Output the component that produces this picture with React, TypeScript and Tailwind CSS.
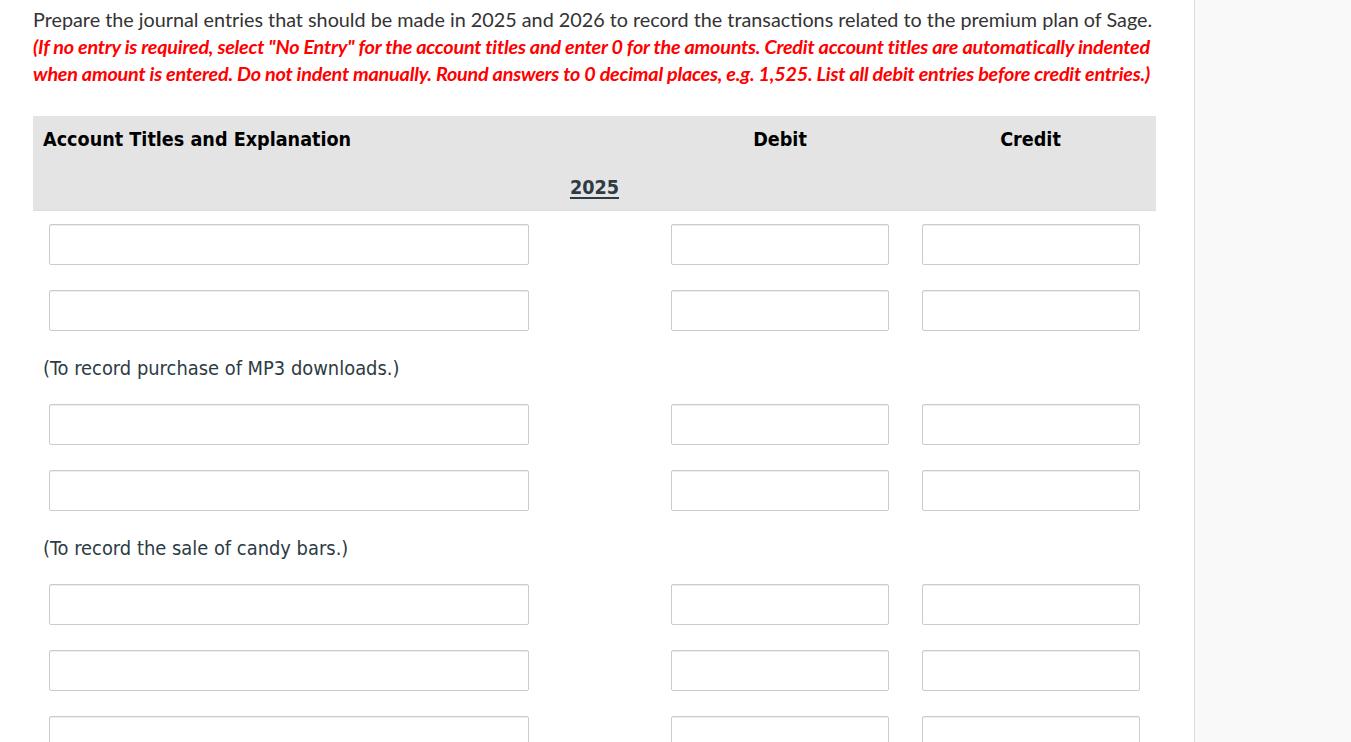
import React from "react";

const tableFont = { fontFamily: 'Tahoma, "DejaVu Sans Condensed", "DejaVu Sans", sans-serif' };

function Input({ w }: { w: string }) {
  return (
    <div
      className={`${w} h-[41px] rounded-[2px] border border-[#cccccc] bg-white shadow-[inset_0_1px_1px_rgba(0,0,0,0.075)]`}
    />
  );
}

function EntryRow() {
  return (
    <div className="grid grid-cols-[622px_250px_251px] h-[66px] pt-[13px]">
      <div className="pl-4">
        <Input w="w-[480px]" />
      </div>
      <div className="flex justify-center">
        <Input w="w-[218px]" />
      </div>
      <div className="flex justify-center">
        <Input w="w-[218px]" />
      </div>
    </div>
  );
}

function Explanation({ text }: { text: string }) {
  return (
    <div
      className="h-[48px] flex items-center pt-[4px] pl-[10px] text-[19.9px] text-[#2d3b45]"
      style={tableFont}
    >
      {text}
    </div>
  );
}

export default function App() {
  return (
    <div className="flex h-[742px] w-[1351px] overflow-hidden bg-white">
      <div className="w-[1194px] shrink-0 pl-[33px] pt-[6px]">
        <div className="w-[1123px]" style={{ fontFamily: 'Lato, "Liberation Sans", sans-serif' }}>
          <p className="text-[19.8px] leading-[27px] text-[#333333]">
            Prepare the journal entries that should be made in 2025 and 2026 to record the transactions related to the premium plan of Sage.
          </p>
          <p className="text-[19.8px] leading-[27px] font-bold italic text-[#ff0000] tracking-[-0.22px]">
            (If no entry is required, select "No Entry" for the account titles and enter 0 for the amounts. Credit account titles are automatically indented when amount is entered. Do not indent manually. Round answers to 0 decimal places, e.g. 1,525. List all debit entries before credit entries.)
          </p>
        </div>

        <div className="mt-[29px] w-[1123px]" style={tableFont}>
          <div className="bg-[#e4e4e4] border-b border-[#dddddd] h-[95px]">
            <div className="grid grid-cols-[622px_250px_251px] pt-[12px] h-[48px] text-[19.6px] leading-[24px] font-bold text-black">
              <div className="pl-[10px]">Account Titles and Explanation</div>
              <div className="text-center">Debit</div>
              <div className="text-center">Credit</div>
            </div>
            <div className="mt-[12px] text-center text-[19.6px] leading-[24px] font-bold text-[#2d3b45] underline decoration-2 underline-offset-[3px]">
              2025
            </div>
          </div>

          <EntryRow />
          <EntryRow />
          <Explanation text="(To record purchase of MP3 downloads.)" />
          <EntryRow />
          <EntryRow />
          <Explanation text="(To record the sale of candy bars.)" />
          <EntryRow />
          <EntryRow />
          <EntryRow />
        </div>
      </div>
      <div className="flex-1 border-l border-[#dddddd] bg-[#f9f9f9]" />
    </div>
  );
}
